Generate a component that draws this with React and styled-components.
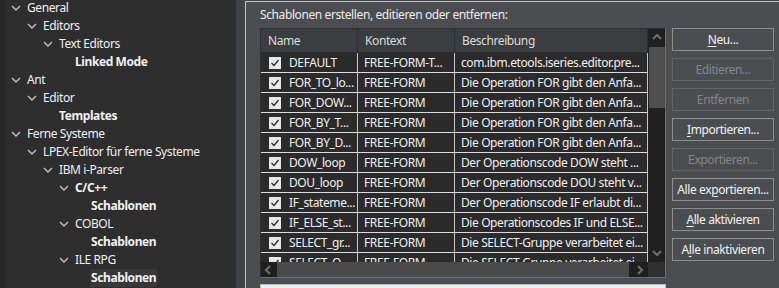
import React from "react";
import styled, { createGlobalStyle } from "styled-components";

const Global = createGlobalStyle`
  html, body { margin: 0; padding: 0; background: #4b4e51; }
  body { font-family: "Noto Sans", "Liberation Sans", sans-serif; font-size: 12px; letter-spacing: -0.4px; }
`;

const Root = styled.div`
  display: flex;
  width: 779px;
  height: 288px;
  overflow: hidden;
`;

const TreePane = styled.div`
  width: 231px;
  flex: none;
  background: #2e2e2e;
  border-left: 5px solid #272727;
  overflow: hidden;
  color: #f0f0f0;
`;

const TreeList = styled.div`
  margin-top: -1px;
  display: flex;
  flex-direction: column;
`;

const TreeRow = styled.div`
  display: flex;
  align-items: center;
  height: 18px;
  padding-left: ${(p) => 3 + p.$level * 16}px;
  white-space: nowrap;
`;

const ChevronBox = styled.span`
  width: 16px;
  height: 18px;
  flex: none;
  display: flex;
  align-items: center;
  justify-content: center;
`;

const TreeLabel = styled.span`
  margin-left: 2px;
  padding: 0 1px;
  line-height: 18px;
  font-weight: ${(p) => (p.$bold ? 700 : 400)};
  background: ${(p) => (p.$selected ? "#383838" : "transparent")};
`;

const Sash = styled.div`
  width: 9px;
  flex: none;
  background: #404345;
`;

const RightWrap = styled.div`
  flex: 1;
  padding-top: 1px;
  background: #404345;
  display: flex;
`;

const RightPane = styled.div`
  flex: 1;
  background: #4b4e51;
  border-top: 1px solid #c4c4c4;
  border-left: 1px solid #c4c4c4;
  padding: 5px 5px 0 14px;
  display: flex;
  flex-direction: column;
  color: #ececec;
`;

const Caption = styled.div`
  line-height: 16px;
  height: 16px;
  margin-bottom: 5px;
  white-space: nowrap;
`;

const Body = styled.div`
  display: flex;
  gap: 6px;
  align-items: flex-start;
`;

const TableFrame = styled.div`
  width: 404px;
  height: 248px;
  flex: none;
  border: 1px solid;
  border-color: #2c2e30 #6e6e6e #6e6e6e #2c2e30;
  display: grid;
  grid-template-columns: 387px 17px;
  grid-template-rows: 233px 15px;
  background: #2b2b2b;
`;

const List = styled.div`
  overflow: hidden;
`;

const cols = "97px 97px 193px";

const HeaderRow = styled.div`
  display: grid;
  grid-template-columns: ${cols};
  height: 24px;
  background: #3b3e40;
`;

const HeaderCell = styled.div`
  border-right: 1px solid #2c2e30;
  border-bottom: 1px solid #2c2e30;
  padding-left: 7px;
  line-height: 23px;
  color: #dcdcdc;
  white-space: nowrap;
  overflow: hidden;
`;

const Row = styled.div`
  display: grid;
  grid-template-columns: ${cols};
  height: 20px;
`;

const Cell = styled.div`
  display: flex;
  align-items: center;
  gap: 8px;
  padding-left: ${(p) => (p.$first ? 8 : 6)}px;
  border-right: 1px solid #c8c8c8;
  border-bottom: 1px solid #dedede;
  color: #f0f0f0;
  white-space: nowrap;
  overflow: hidden;
  line-height: 19px;
`;

const Check = styled.span`
  width: 12px;
  height: 12px;
  flex: none;
  background: #e8e8e8;
  display: flex;
  align-items: center;
  justify-content: center;
`;

const VScroll = styled.div`
  background: #202020;
  display: flex;
  flex-direction: column;
  align-items: center;
`;

const ArrowBox = styled.div`
  width: 17px;
  height: 17px;
  flex: none;
  display: flex;
  align-items: center;
  justify-content: center;
`;

const VThumb = styled.div`
  width: 16px;
  height: 61px;
  background: #4e4e4e;
  margin-top: 1px;
`;

const Spacer = styled.div`
  flex: 1;
`;

const HScroll = styled.div`
  background: #1f1f1f;
  display: flex;
  align-items: stretch;
`;

const HArrow = styled.div`
  width: 16px;
  flex: none;
  display: flex;
  align-items: center;
  justify-content: center;
`;

const HThumb = styled.div`
  width: 352px;
  background: #4a4a4a;
`;

const Corner = styled.div`
  background: #303030;
`;

const Buttons = styled.div`
  display: flex;
  flex-direction: column;
  gap: 7px;
  width: 102px;
  flex: none;
`;

const Button = styled.button`
  height: 23px;
  width: 102px;
  box-sizing: border-box;
  background: #4b4e51;
  border: 1px solid ${(p) => (p.disabled ? "#636669" : "#8e8e8e")};
  color: ${(p) => (p.disabled ? "#83868a" : "#f2f2f2")};
  font-family: inherit;
  font-size: 12px;
  letter-spacing: -0.4px;
  padding: 0;
  white-space: nowrap;
  line-height: 20px;
  u { text-decoration: underline; text-underline-offset: 2px; }
`;

const InputStrip = styled.div`
  margin-top: 6px;
  width: 404px;
  height: 20px;
  background: #eef0f7;
  border: 1px solid #b9bcc2;
`;

const Chevron = () => (
  <svg width="10" height="6" viewBox="0 0 10 6">
    <polyline points="1,1 5,5 9,1" fill="none" stroke="#c2c2c2" strokeWidth="1.4" />
  </svg>
);

const tree = [
  { l: 0, t: "General", c: true },
  { l: 1, t: "Editors", c: true },
  { l: 2, t: "Text Editors", c: true },
  { l: 3, t: "Linked Mode", b: true },
  { l: 0, t: "Ant", c: true },
  { l: 1, t: "Editor", c: true },
  { l: 2, t: "Templates", b: true },
  { l: 0, t: "Ferne Systeme", c: true },
  { l: 1, t: "LPEX-Editor für ferne Systeme", c: true },
  { l: 2, t: "IBM i-Parser", c: true },
  { l: 3, t: "C/C++", c: true, b: true },
  { l: 4, t: "Schablonen", b: true },
  { l: 3, t: "COBOL", c: true },
  { l: 4, t: "Schablonen", b: true },
  { l: 3, t: "ILE RPG", c: true },
  { l: 4, t: "Schablonen", b: true, s: true },
];

const rows = [
  ["DEFAULT", "FREE-FORM-T...", "com.ibm.etools.iseries.editor.pre..."],
  ["FOR_TO_lo...", "FREE-FORM", "Die Operation FOR gibt den Anfa..."],
  ["FOR_DOW...", "FREE-FORM", "Die Operation FOR gibt den Anfa..."],
  ["FOR_BY_T...", "FREE-FORM", "Die Operation FOR gibt den Anfa..."],
  ["FOR_BY_D...", "FREE-FORM", "Die Operation FOR gibt den Anfa..."],
  ["DOW_loop", "FREE-FORM", "Der Operationscode DOW steht ..."],
  ["DOU_loop", "FREE-FORM", "Der Operationscode DOU steht v..."],
  ["IF_stateme...", "FREE-FORM", "Der Operationscode IF erlaubt di..."],
  ["IF_ELSE_st...", "FREE-FORM", "Die Operationscodes IF und ELSE..."],
  ["SELECT_gr...", "FREE-FORM", "Die SELECT-Gruppe verarbeitet ei..."],
  ["SELECT_O...", "FREE-FORM", "Die SELECT-Gruppe verarbeitet ei..."],
];

const CheckMark = () => (
  <Check>
    <svg width="10" height="10" viewBox="0 0 10 10">
      <polyline points="1.5,5 4,7.5 8.5,2" fill="none" stroke="#2b2b2b" strokeWidth="1.3" />
    </svg>
  </Check>
);

const Arrow = ({ dir }) => {
  const pts = {
    up: "1,6 5,2 9,6",
    down: "1,2 5,6 9,2",
    left: "6,1 2,5 6,9",
    right: "3,1 7,5 3,9",
  }[dir];
  return (
    <svg width="10" height="10" viewBox="0 0 10 10">
      <polyline points={pts} fill="none" stroke="#6e6e6e" strokeWidth="2" />
    </svg>
  );
};

export default function App() {
  return (
    <Root>
      <Global />
      <TreePane>
        <TreeList>
          {tree.map((n, i) => (
            <TreeRow key={i} $level={n.l}>
              <ChevronBox>{n.c && <Chevron />}</ChevronBox>
              <TreeLabel $bold={n.b} $selected={n.s}>{n.t}</TreeLabel>
            </TreeRow>
          ))}
        </TreeList>
      </TreePane>
      <Sash />
      <RightWrap>
        <RightPane>
          <Caption>Schablonen erstellen, editieren oder entfernen:</Caption>
          <Body>
            <div>
              <TableFrame>
                <List>
                  <HeaderRow>
                    <HeaderCell>Name</HeaderCell>
                    <HeaderCell>Kontext</HeaderCell>
                    <HeaderCell>Beschreibung</HeaderCell>
                  </HeaderRow>
                  {rows.map((r, i) => (
                    <Row key={i}>
                      <Cell $first>
                        <CheckMark />
                        {r[0]}
                      </Cell>
                      <Cell>{r[1]}</Cell>
                      <Cell>{r[2]}</Cell>
                    </Row>
                  ))}
                </List>
                <VScroll>
                  <ArrowBox><Arrow dir="up" /></ArrowBox>
                  <VThumb />
                  <Spacer />
                  <ArrowBox><Arrow dir="down" /></ArrowBox>
                </VScroll>
                <HScroll>
                  <HArrow><Arrow dir="left" /></HArrow>
                  <HThumb />
                  <Spacer />
                  <HArrow><Arrow dir="right" /></HArrow>
                </HScroll>
                <Corner />
              </TableFrame>
              <InputStrip />
            </div>
            <Buttons>
              <Button><u>N</u>eu...</Button>
              <Button disabled>Editieren...</Button>
              <Button disabled>Entfernen</Button>
              <Button><u>I</u>mportieren...</Button>
              <Button disabled>Exportieren...</Button>
              <Button>Alle ex<u>p</u>ortieren...</Button>
              <Button><u>A</u>lle aktivieren</Button>
              <Button>A<u>l</u>le inaktivieren</Button>
            </Buttons>
          </Body>
        </RightPane>
      </RightWrap>
    </Root>
  );
}
